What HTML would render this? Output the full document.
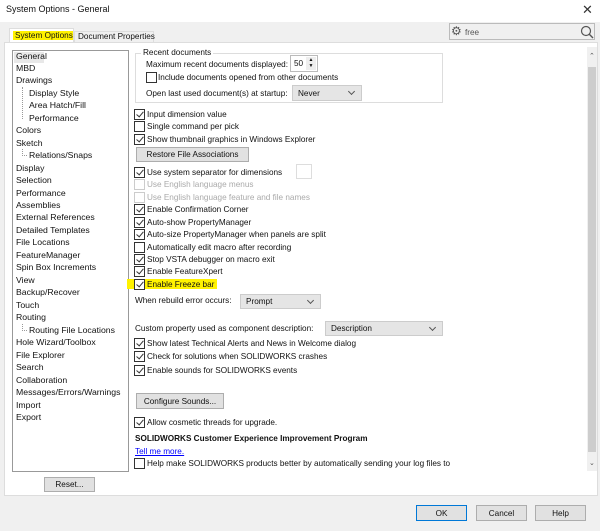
<!DOCTYPE html>
<html><head><meta charset="utf-8"><style>
*{margin:0;padding:0;box-sizing:border-box}
body{width:600px;height:531px;background:#f0f0f0;font-family:"Liberation Sans",sans-serif;font-size:8.2px;color:#111;position:relative;overflow:hidden}
.a{position:absolute;white-space:nowrap}
.t{position:absolute;white-space:nowrap;line-height:11px}
.l{font-size:8.7px}
.cb{position:absolute;width:11px;height:11px;border:1px solid #333;background:#fff}
.cb.c::after{content:"";position:absolute;left:3px;top:0px;width:3px;height:6px;border:solid #333;border-width:0 1.3px 1.3px 0;transform:rotate(40deg)}
.cb.d{border-color:#ccc}
.btn{position:absolute;background:#e1e1e1;border:1px solid #adadad;text-align:center;line-height:14px}
.dd{position:absolute;background:#e5e5e5;border:1px solid #ccc;padding-left:5px;line-height:13px}
.dd::after{content:"";position:absolute;right:7px;top:3px;width:4px;height:4px;border:solid #555;border-width:0 1px 1px 0;transform:rotate(45deg)}
.g{color:#aaa}
</style></head><body>
<div class="a" style="left:0;top:0;width:600px;height:22px;background:#fff"></div>
<div class="t" style="left:6px;top:4px;font-size:9px">System Options - General</div>
<div class="a" style="left:582px;top:2px;font-size:13px;color:#333">✕</div>
<div class="a" style="left:9px;top:28px;width:65px;height:15px;background:#fff;border:1px solid #ddd;border-bottom:none"></div>
<div class="a" style="left:13px;top:31px;width:60px;height:9px;background:#fff200"></div>
<div class="t" style="left:15px;top:30px">System Options</div>
<div class="a" style="left:74px;top:31px;width:80px;height:12px;border:1px solid #ddd;border-bottom:none;background:#f0f0f0"></div>
<div class="t" style="left:78px;top:31px">Document Properties</div>
<div class="a" style="left:449px;top:23px;width:146px;height:17px;background:#f0f0f0;border:1px solid #bbb"></div>
<div class="a" style="left:451px;top:24px;font-size:12px;color:#555">⚙</div>
<div class="t" style="left:465px;top:27px;color:#555">free</div>
<svg class="a" style="left:580px;top:25px" width="14" height="14"><circle cx="6" cy="6" r="4.5" fill="none" stroke="#555" stroke-width="1.2"/><line x1="9.3" y1="9.3" x2="13" y2="13" stroke="#555" stroke-width="1.4"/></svg>
<div class="a" style="left:4px;top:42px;width:594px;height:454px;background:#fff;border:1px solid #ddd"></div>
<div class="a" style="left:12px;top:50px;width:117px;height:422px;border:1px solid #999;background:#fff"></div>
<div class="a" style="left:14px;top:52px;width:30px;height:11px;background:#e8e8e8"></div>
<div class="l">
<div class="t" style="left:16px;top:51px">General</div>
<div class="t" style="left:16px;top:63px">MBD</div>
<div class="t" style="left:16px;top:75px">Drawings</div>
<div class="t" style="left:29px;top:88px">Display Style</div>
<div class="t" style="left:29px;top:100px">Area Hatch/Fill</div>
<div class="t" style="left:29px;top:113px">Performance</div>
<div class="t" style="left:16px;top:125px">Colors</div>
<div class="t" style="left:16px;top:138px">Sketch</div>
<div class="t" style="left:29px;top:150px">Relations/Snaps</div>
<div class="t" style="left:16px;top:163px">Display</div>
<div class="t" style="left:16px;top:175px">Selection</div>
<div class="t" style="left:16px;top:188px">Performance</div>
<div class="t" style="left:16px;top:200px">Assemblies</div>
<div class="t" style="left:16px;top:212px">External References</div>
<div class="t" style="left:16px;top:225px">Detailed Templates</div>
<div class="t" style="left:16px;top:237px">File Locations</div>
<div class="t" style="left:16px;top:250px">FeatureManager</div>
<div class="t" style="left:16px;top:262px">Spin Box Increments</div>
<div class="t" style="left:16px;top:275px">View</div>
<div class="t" style="left:16px;top:287px">Backup/Recover</div>
<div class="t" style="left:16px;top:300px">Touch</div>
<div class="t" style="left:16px;top:312px">Routing</div>
<div class="t" style="left:29px;top:325px">Routing File Locations</div>
<div class="t" style="left:16px;top:337px">Hole Wizard/Toolbox</div>
<div class="t" style="left:16px;top:350px">File Explorer</div>
<div class="t" style="left:16px;top:362px">Search</div>
<div class="t" style="left:16px;top:375px">Collaboration</div>
<div class="t" style="left:16px;top:387px">Messages/Errors/Warnings</div>
<div class="t" style="left:16px;top:400px">Import</div>
<div class="t" style="left:16px;top:412px">Export</div>
</div>
<div class="a" style="left:22px;top:87px;width:5px;height:32px;border-left:1px dotted #999"></div>
<div class="a" style="left:22px;top:149px;width:5px;height:7px;border-left:1px dotted #999;border-bottom:1px dotted #999"></div>
<div class="a" style="left:22px;top:324px;width:5px;height:7px;border-left:1px dotted #999;border-bottom:1px dotted #999"></div>
<div class="btn" style="left:44px;top:477px;width:51px;height:15px">Reset...</div>
<div class="a" style="left:587px;top:47px;width:10px;height:424px;background:#f0f0f0"></div>
<div class="a" style="left:588px;top:67px;width:8px;height:385px;background:#cdcdcd"></div>
<div class="a" style="left:589px;top:52px;font-size:7px;color:#555">⌃</div>
<div class="a" style="left:589px;top:459px;font-size:7px;color:#555">⌄</div>
<div class="a" style="left:135px;top:53px;width:308px;height:50px;border:1px solid #ddd"></div>
<div class="t" style="left:141px;top:47px;background:#fff;padding:0 2px">Recent documents</div>
<div class="t" style="left:146px;top:59px">Maximum recent documents displayed:</div>
<div class="a" style="left:290px;top:55px;width:28px;height:17px;border:1px solid #bbb;background:#fff"></div>
<div class="t" style="left:294px;top:58px">50</div>
<div class="a" style="left:306px;top:57px;width:10px;height:13px;background:#eee;font-size:5px;line-height:6px;text-align:center">▲<br>▼</div>
<div class="cb" style="left:146px;top:72px"></div>
<div class="t" style="left:158px;top:72px">Include documents opened from other documents</div>
<div class="t" style="left:146px;top:88px">Open last used document(s) at startup:</div>
<div class="dd" style="left:292px;top:85px;width:70px;height:16px;padding-top:1px">Never</div>
<div class="cb c" style="left:134px;top:109px"></div><div class="t" style="left:147px;top:109px">Input dimension value</div>
<div class="cb" style="left:134px;top:121px"></div><div class="t" style="left:147px;top:121px">Single command per pick</div>
<div class="cb c" style="left:134px;top:134px"></div><div class="t" style="left:147px;top:134px">Show thumbnail graphics in Windows Explorer</div>
<div class="btn" style="left:136px;top:147px;width:113px;height:15px">Restore File Associations</div>
<div class="cb c" style="left:134px;top:167px"></div><div class="t" style="left:147px;top:167px">Use system separator for dimensions</div>
<div class="a" style="left:296px;top:164px;width:16px;height:15px;border:1px solid #ddd"></div>
<div class="cb d" style="left:134px;top:179px"></div><div class="t g" style="left:147px;top:179px">Use English language menus</div>
<div class="cb d" style="left:134px;top:192px"></div><div class="t g" style="left:147px;top:192px">Use English language feature and file names</div>
<div class="cb c" style="left:134px;top:204px"></div><div class="t" style="left:147px;top:204px">Enable Confirmation Corner</div>
<div class="cb c" style="left:134px;top:217px"></div><div class="t" style="left:147px;top:217px">Auto-show PropertyManager</div>
<div class="cb c" style="left:134px;top:229px"></div><div class="t" style="left:147px;top:229px">Auto-size PropertyManager when panels are split</div>
<div class="cb" style="left:134px;top:242px"></div><div class="t" style="left:147px;top:242px">Automatically edit macro after recording</div>
<div class="cb c" style="left:134px;top:254px"></div><div class="t" style="left:147px;top:254px">Stop VSTA debugger on macro exit</div>
<div class="cb c" style="left:134px;top:266px"></div><div class="t" style="left:147px;top:266px">Enable FeatureXpert</div>
<div class="a" style="left:127px;top:279px;width:90px;height:10px;background:#fff200"></div>
<div class="cb c" style="left:134px;top:279px"></div><div class="t" style="left:147px;top:279px">Enable Freeze bar</div>
<div class="t" style="left:135px;top:295px">When rebuild error occurs:</div>
<div class="dd" style="left:240px;top:294px;width:81px;height:15px">Prompt</div>
<div class="t" style="left:135px;top:323px">Custom property used as component description:</div>
<div class="dd" style="left:325px;top:321px;width:118px;height:15px">Description</div>
<div class="cb c" style="left:134px;top:338px"></div><div class="t" style="left:147px;top:338px">Show latest Technical Alerts and News in Welcome dialog</div>
<div class="cb c" style="left:134px;top:351px"></div><div class="t" style="left:147px;top:351px">Check for solutions when SOLIDWORKS crashes</div>
<div class="cb c" style="left:134px;top:365px"></div><div class="t" style="left:147px;top:365px">Enable sounds for SOLIDWORKS events</div>
<div class="btn" style="left:136px;top:393px;width:88px;height:16px;line-height:15px">Configure Sounds...</div>
<div class="cb c" style="left:134px;top:417px"></div><div class="t" style="left:147px;top:417px">Allow cosmetic threads for upgrade.</div>
<div class="t" style="left:135px;top:433px;font-weight:bold">SOLIDWORKS Customer Experience Improvement Program</div>
<div class="t" style="left:135px;top:446px;color:#00f;text-decoration:underline">Tell me more.</div>
<div class="a" style="left:130px;top:457px;width:455px;height:14px;overflow:hidden">
<div class="cb" style="left:4px;top:1px"></div><div class="t" style="left:17px;top:1px">Help make SOLIDWORKS products better by automatically sending your log files to<br>DS SolidWorks Corporation</div></div>
<div class="btn" style="left:416px;top:505px;width:51px;height:16px;border:1px solid #0078d7;line-height:15px">OK</div>
<div class="btn" style="left:476px;top:505px;width:51px;height:16px;line-height:15px">Cancel</div>
<div class="btn" style="left:535px;top:505px;width:51px;height:16px;line-height:15px">Help</div>
</body></html>
